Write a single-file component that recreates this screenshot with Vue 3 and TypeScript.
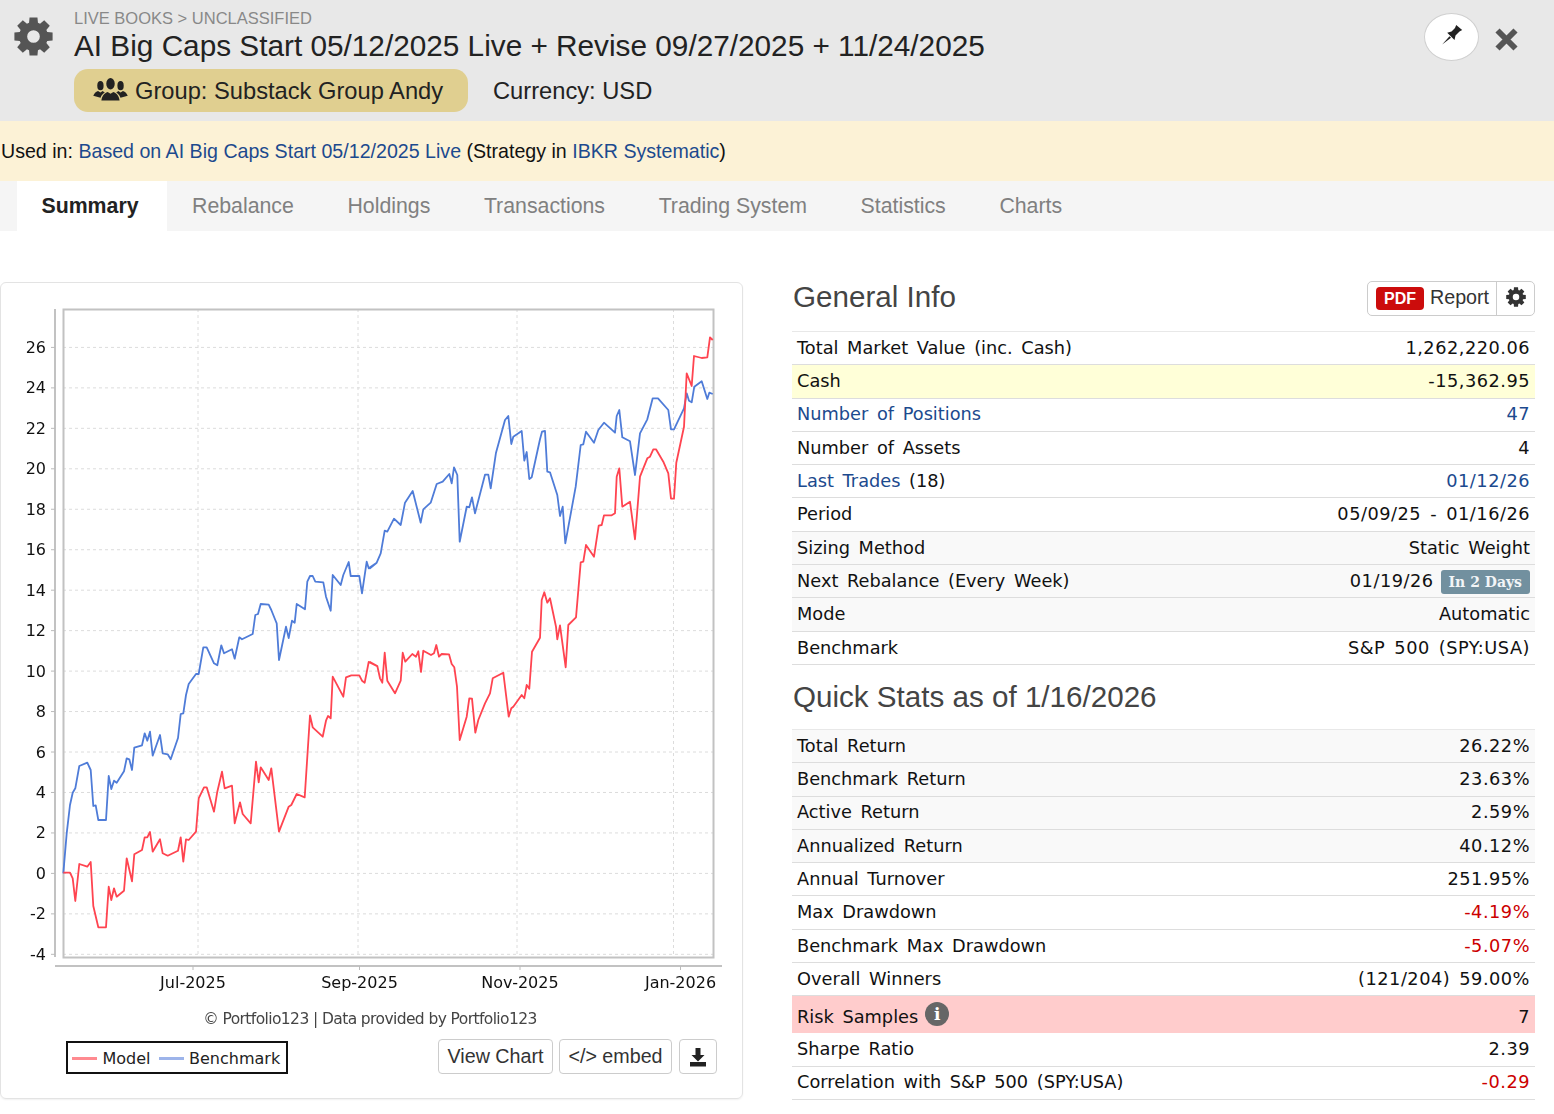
<script setup lang="ts">
type P = [number, number]

function gear(cx: number, cy: number, r: number, hole: number, teeth: number): string {
  const pts: string[] = []
  const outer = r
  const inner = r * 0.74
  for (let i = 0; i < teeth; i++) {
    const a = (i * 2 * Math.PI) / teeth - Math.PI / 2
    const w = Math.PI / teeth
    const seq: [number, number][] = [
      [inner, a - w * 0.8],
      [outer, a - w * 0.52],
      [outer, a + w * 0.52],
      [inner, a + w * 0.8],
    ]
    for (const [rr, t] of seq) pts.push(`${(cx + rr * Math.cos(t)).toFixed(2)} ${(cy + rr * Math.sin(t)).toFixed(2)}`)
  }
  const h = `M${cx - hole} ${cy}a${hole} ${hole} 0 1 0 ${hole * 2} 0a${hole} ${hole} 0 1 0 ${-hole * 2} 0z`
  return `M${pts.join('L')}z${h}`
}
const gearD = gear(12, 12, 12, 3.9, 8)

const z3 = (a: number[]): P[] => {
  const out: P[] = []
  for (let i = 0; i < a.length; i += 2) out.push([a[i] / 3, 280 + a[i + 1] / 3])
  return out
}
const z4 = (a: number[]): P[] => {
  const out: P[] = []
  for (let i = 0; i < a.length; i += 2) out.push([370 + a[i] / 3, 280 + a[i + 1] / 3])
  return out
}
const z5 = (a: number[]): P[] => {
  const out: P[] = []
  for (let i = 0; i < a.length; i += 2) out.push([a[i] / 3, 610 + a[i + 1] / 3])
  return out
}
const z6 = (a: number[]): P[] => {
  const out: P[] = []
  for (let i = 0; i < a.length; i += 2) out.push([370 + a[i] / 3, 610 + a[i + 1] / 3])
  return out
}
const pts = (p: P[]) => p.map(([x, y]) => `${x.toFixed(1)},${(y - 282).toFixed(1)}`).join(' ')

const blue = pts([
  ...z5([190,790,200,670,210,585,218,548,226,535,238,468,262,458,272,480,280,588,287,586,295,630,318,630,326,498,334,537,342,512,350,518,372,484,380,445,388,448,396,480,403,413,426,406,434,370,442,392,450,365,458,437,480,375,488,430,503,433,512,448,534,384,542,312,550,310,558,255,566,222,588,192,596,192,610,112,620,112,642,160,652,166,664,106,672,130,696,118,704,146,718,82,726,88,758,72,766,15,774,12]),
  ...z3([782,972,806,974,814,990,826,1020]),
  ...z5([830,40,837,150,858,50,866,84,876,32,884,38]),
  ...z3([890,972,915,988,922,905,930,888,938,888,946,905,970,907,978,950,992,992,998,885,1022,915,1030,885,1046,846,1052,888,1078,888,1086,940,1100,845,1106,865,1130,848]),
  ...z4([0,865,20,848,32,820,44,752,52,755,72,716,92,735,105,668,128,633,152,728,160,688,182,668,200,612,218,605,238,582,245,610,252,562,262,585,269,785,290,680,298,682,306,652,315,700,345,584,355,584,362,625,378,518,405,420,415,408,424,492,430,470,455,453,463,542,470,516,478,597,485,592,510,478,516,455,525,453,532,575,540,577,562,645,570,708,578,680,586,790,617,620,632,495,640,493,648,455,672,488,685,450,702,428,735,458,740,408,748,390,757,472,780,484,795,585,810,460,832,418,848,355,864,355,895,390,903,448,912,448,942,385,950,340,957,362,965,367,973,320,995,304,1012,357,1018,338,1028,342]),
])
const red = pts([
  ...z5([190,788,210,788,218,805,226,873,238,762,262,770,272,756,280,888,295,952,318,952,326,830,334,870,342,835,350,860,372,842,380,745,396,814,403,733,426,720,434,682,442,682,450,666,458,725,480,688,488,730,503,737,534,722,542,682,550,755,558,688,566,690,588,665,596,565,612,532,620,532,642,605,652,545,666,485,674,535,696,527,704,640,720,577,728,612,752,640,768,455,776,517,782,472,806,510,814,475,837,665,866,590,874,585,890,552,914,562,930,316,938,352,968,380,978,332,984,318,992,325,998,200,1030,260,1038,202,1054,196,1078,196,1086,212,1094,218,1106,156,1130,168]),
  ...z6([0,156,22,168,30,205,37,218,44,128,52,212,75,250,92,212,98,128,106,155,127,132,138,140,145,124,153,186,160,122,183,135,192,130,199,105,207,140,215,132,237,133,245,162,253,172,261,230,269,390,290,320,298,265,306,266,316,368,325,330,345,280,360,250,368,205,400,188,416,320,424,295,430,290,455,255,463,265,470,225,478,236,486,125,510,83]),
  ...z4([515,960,523,937,532,968,540,955,558,1040]),
  ...z6([562,88,570,46,587,172,595,45,618,22]),
  ...z4([632,847,640,845,648,795,672,830,686,737,695,735,702,706,725,706,735,700,740,590,748,565,757,680,780,665,795,778,810,590,832,535,840,530,850,508,858,508,880,545,895,580,903,656,912,656,919,548,942,440,950,280,965,318,972,228,995,234,1012,232,1020,172,1028,180]),
])

const yTicks = [26, 24, 22, 20, 18, 16, 14, 12, 10, 8, 6, 4, 2, 0, -2, -4].map((v) => ({
  v,
  y: 873.4 - v * 20.23 - 282,
}))
const xGrid = [198, 358, 517, 673.5]
const xTicks = [
  { x: 193, l: 'Jul-2025' },
  { x: 359.5, l: 'Sep-2025' },
  { x: 520, l: 'Nov-2025' },
  { x: 680.5, l: 'Jan-2026' },
]

const tabs = ['Rebalance', 'Holdings', 'Transactions', 'Trading System', 'Statistics', 'Charts']

interface Row {
  k: string
  v: string
  link?: boolean
  vlink?: boolean
  neg?: boolean
  tone?: 'alt' | 'warn' | 'risk'
  extra?: string
  badge?: string
  info?: boolean
}
const general: Row[] = [
  { k: 'Total Market Value (inc. Cash)', v: '1,262,220.06' },
  { k: 'Cash', v: '-15,362.95', tone: 'warn' },
  { k: 'Number of Positions', v: '47', link: true, vlink: true },
  { k: 'Number of Assets', v: '4' },
  { k: 'Last Trades', extra: ' (18)', v: '01/12/26', link: true, vlink: true },
  { k: 'Period', v: '05/09/25 - 01/16/26' },
  { k: 'Sizing Method', v: 'Static Weight', tone: 'alt' },
  { k: 'Next Rebalance (Every Week)', v: '01/19/26', badge: 'In 2 Days', tone: 'alt' },
  { k: 'Mode', v: 'Automatic', tone: 'alt' },
  { k: 'Benchmark', v: 'S&P 500 (SPY:USA)' },
]
const stats: Row[] = [
  { k: 'Total Return', v: '26.22%', tone: 'alt' },
  { k: 'Benchmark Return', v: '23.63%', tone: 'alt' },
  { k: 'Active Return', v: '2.59%', tone: 'alt' },
  { k: 'Annualized Return', v: '40.12%', tone: 'alt' },
  { k: 'Annual Turnover', v: '251.95%' },
  { k: 'Max Drawdown', v: '-4.19%', neg: true },
  { k: 'Benchmark Max Drawdown', v: '-5.07%', neg: true },
  { k: 'Overall Winners', v: '(121/204) 59.00%' },
  { k: 'Risk Samples', v: '7', tone: 'risk', info: true },
  { k: 'Sharpe Ratio', v: '2.39' },
  { k: 'Correlation with S&P 500 (SPY:USA)', v: '-0.29', neg: true },
]
const isNum = (s: string) => /\d/.test(s)
</script>

<template>
  <div class="page">
    <header class="top">
      <svg class="top-gear" viewBox="0 0 24 24"><path :d="gearD" fill="#555" fill-rule="evenodd" /></svg>
      <div class="top-text">
        <div class="crumb">LIVE BOOKS &gt; UNCLASSIFIED</div>
        <h1 class="title">AI Big Caps Start 05/12/2025 Live + Revise 09/27/2025 + 11/24/2025</h1>
        <div class="meta">
          <span class="group">
            <svg class="users" viewBox="0 0 36 24">
              <g fill="#222">
                <ellipse cx="18" cy="6" rx="4.4" ry="6" />
                <path d="M8.500 23.500c.5-5 3-7.500 6.500-9l3 2 3-2c3.500 1.500 6 4 6.500 9z" />
                <ellipse cx="7.500" cy="8" rx="3.300" ry="4.800" />
                <path d="M0 18.500c1-2.500 2.500-4 5-5l2.500 1.500 2.300-1.400c.7.500 1.400 1 2.200 1.400-2 1.200-3.600 3-4.400 5.500z" />
                <ellipse cx="28.500" cy="8" rx="3.300" ry="4.800" />
                <path d="M36 18.500c-1-2.500-2.500-4-5-5l-2.500 1.500-2.300-1.400c-.7.500-1.400 1-2.200 1.400 2 1.200 3.600 3 4.400 5.500z" />
              </g>
            </svg>
            Group: Substack Group Andy
          </span>
          <span class="currency">Currency: USD</span>
        </div>
      </div>
      <div class="top-actions">
        <button class="pin" type="button" aria-label="Pin">
          <svg class="pin-ico" viewBox="0 0 24 24" width="24" height="24">
            <path d="M16.200 2l6 5-2.700 1.500-4 4-1 4.500-7.300-7.300 4.300-1.200 3.500-3.500z" fill="#222" />
            <path d="M9.500 13.200l1.500 1.500-8.800 6.800z" fill="#222" />
          </svg>
        </button>
        <button class="close" type="button" aria-label="Close">
          <svg viewBox="0 0 24 24" width="27" height="27">
            <path d="M4 4l16 16M20 4L4 20" stroke="#555" stroke-width="5.200" />
          </svg>
        </button>
      </div>
    </header>

    <div class="used">
      Used in: <a class="lnk">Based on AI Big Caps Start 05/12/2025 Live</a> (Strategy in <a class="lnk">IBKR Systematic</a>)
    </div>

    <nav class="tabs">
      <span class="tab active">Summary</span>
      <span v-for="t in tabs" :key="t" class="tab">{{ t }}</span>
    </nav>

    <main class="content">
      <section class="card">
        <svg class="chart" width="741" height="720" viewBox="0 0 741 720">
          <g class="soft" transform="translate(-1 -1)">
            <g stroke="#dcdcdc" stroke-dasharray="3 3" stroke-width="1">
              <line v-for="t in yTicks" :key="t.v" x1="63" x2="713" :y1="t.y" :y2="t.y" />
              <line v-for="x in xGrid" :key="x" :x1="x" :x2="x" y1="27" y2="675" />
            </g>
            <rect x="63.500" y="27.500" width="650" height="648" fill="none" stroke="#c2c2c2" stroke-width="2" />
            <line x1="55" x2="55" y1="27" y2="675" stroke="#c2c2c2" stroke-width="2" />
            <line x1="55" x2="722" y1="684" y2="684" stroke="#c2c2c2" stroke-width="2" />
            <line v-for="t in yTicks" :key="'y' + t.v" x1="51" x2="55" :y1="t.y" :y2="t.y" stroke="#bbb" />
            <line v-for="t in xTicks" :key="'x' + t.l" :x1="t.x" :x2="t.x" y1="684" y2="688" stroke="#bbb" />
            <polyline :points="blue" fill="none" stroke="#4f7cd8" stroke-width="1.800" stroke-linejoin="round" />
            <polyline :points="red" fill="none" stroke="#ff4450" stroke-width="1.800" stroke-linejoin="round" />
            <text v-for="t in yTicks" :key="'l' + t.v" class="tick" x="46" :y="t.y + 5.500" text-anchor="end">{{ t.v }}</text>
            <text v-for="t in xTicks" :key="'t' + t.l" class="tick" :x="t.x" y="706" text-anchor="middle">{{ t.l }}</text>
            <text class="credit" x="370" y="742" text-anchor="middle">© Portfolio123 | Data provided by Portfolio123</text>
          </g>
        </svg>
        <div class="chart-foot">
          <div class="legend">
            <i class="swatch red"></i><span>Model</span>
            <i class="swatch blue"></i><span>Benchmark</span>
          </div>
          <div class="chart-btns">
            <button class="btn w1" type="button">View Chart</button>
            <button class="btn w2" type="button">&lt;/&gt; embed</button>
            <button class="btn dl" type="button" aria-label="Download">
              <svg viewBox="0 0 20 20" width="20" height="20">
                <path d="M7.500 1h5v7h4L10 14.500 3.500 8h4z" fill="#222" />
                <rect x="2" y="15" width="16" height="4.500" fill="#222" />
              </svg>
            </button>
          </div>
        </div>
      </section>

      <section class="side">
        <div class="head">
          <h2>General Info</h2>
          <div class="report">
            <span class="report-main"><b class="pdf">PDF</b><span class="report-label">Report</span></span>
            <span class="report-gear">
              <svg class="rg" viewBox="0 0 24 24" width="20" height="20"><path :d="gearD" fill="#333" fill-rule="evenodd" /></svg>
            </span>
          </div>
        </div>
        <div class="table general">
          <div v-for="r in general" :key="r.k" class="row" :class="r.tone">
            <span><a v-if="r.link" class="lnk">{{ r.k }}</a><template v-else>{{ r.k }}</template>{{ r.extra }}</span>
            <span class="val" :class="{ neg: r.neg, num: isNum(r.v) }">
              <a v-if="r.vlink" class="lnk">{{ r.v }}</a><template v-else>{{ r.v }}</template>
              <em v-if="r.badge" class="badge">{{ r.badge }}</em>
            </span>
          </div>
        </div>
        <h2 class="h2b">Quick Stats as of 1/16/2026</h2>
        <div class="table">
          <div v-for="r in stats" :key="r.k" class="row" :class="r.tone">
            <span class="key">{{ r.k }}<i v-if="r.info" class="info">i</i></span>
            <span class="val" :class="{ neg: r.neg, num: isNum(r.v) }">{{ r.v }}</span>
          </div>
        </div>
      </section>
    </main>
  </div>
</template>

<style>
html, body { margin: 0; background: #fff; overflow: hidden; }
</style>

<style scoped>
.page { width: 1554px; height: 1114px; overflow: hidden; font-family: "Liberation Sans", Arial, sans-serif; color: #222; background: #fff; }
.top { height: 121px; box-sizing: border-box; background: #e8e8e8; display: flex; align-items: flex-start; padding-left: 14px; }
.top-gear { width: 39px; height: 39px; margin-top: 17px; flex: none; }
.top-text { margin-left: 21px; padding-top: 10px; flex: 1; }
.crumb { font-size: 16.500px; line-height: 17px; color: #888; }
.title { margin: -1px 0 1px; font-size: 29.750px; line-height: 39px; font-weight: 400; color: #222; }
.meta { display: flex; align-items: center; margin-top: 4px; font-size: 23.700px; }
.group { display: inline-flex; align-items: center; gap: 7px; height: 43px; width: 394px; box-sizing: border-box; padding: 2px 0 0 19px; background: #e0cf90; border-radius: 14px; }
.users { width: 35px; height: 23px; margin-top: -5px; }
.currency { margin-left: 25px; padding-top: 2px; }
.top-actions { display: flex; align-items: center; gap: 14px; padding: 13px 34px 0 0; }
.pin { width: 55px; height: 48px; border-radius: 50%; border: 1px solid #d0d0d0; background: #fff; padding: 0; display: flex; align-items: center; justify-content: center; }
.pin-ico { margin-top: -4px; }
.close { width: 27px; height: 27px; margin-top: 4px; background: none; border: 0; padding: 0; display: flex; }
.used { height: 60px; background: #fcf2d6; font-size: 19.620px; line-height: 60px; padding-left: 1px; color: #111; }
.lnk { color: #1c4a8e; }
.tabs { height: 50px; background: #f5f5f5; display: flex; padding-left: 17px; }
.tab { font-size: 21.300px; line-height: 50px; color: #808080; padding: 0 28.600px 0 25px; }
.tab.active { background: #fff; color: #222; font-weight: 700; width: 150px; box-sizing: border-box; padding: 0 4px 0 0; text-align: center; }
.content { display: grid; grid-template-columns: 743px 743px; column-gap: 49px; padding: 50px 0 0 0; }
.card { margin: 1px 0 0 0; height: 817px; box-sizing: border-box; border: 1px solid #e3e3e3; border-radius: 6px; box-shadow: 0 1px 2px rgba(0, 0, 0, 0.06); display: flex; flex-direction: column; position: relative; }
.chart { display: block; flex: none; overflow: visible; }
.soft { filter: blur(0.4px); }
.tick { font-family: "DejaVu Sans", sans-serif; font-size: 16px; fill: #111; }
.credit { font-family: "DejaVu Sans", sans-serif; font-size: 15.500px; fill: #444; letter-spacing: -0.600px; }
.chart-foot { position: absolute; left: 65px; right: 25px; top: 756px; display: flex; justify-content: space-between; align-items: flex-start; }
.legend { margin-top: 2px; width: 222px; height: 33px; box-sizing: border-box; border: 2px solid #111; display: flex; align-items: center; padding: 1px 0 0 4px; font-family: "DejaVu Sans", sans-serif; font-size: 16px; color: #222; }
.swatch { display: block; width: 25px; height: 3px; margin-right: 5.500px; }
.swatch.red { background: #ff8a90; }
.swatch.blue { background: #9db4ea; margin-left: 8px; }
.chart-btns { display: flex; gap: 6px; }
.btn { height: 35px; box-sizing: border-box; background: #fff; border: 1px solid #ccc; border-radius: 4px; font-family: "Liberation Sans", sans-serif; font-size: 19.700px; color: #333; padding: 0; line-height: 1; }
.w1 { width: 115px; }
.w2 { width: 113px; }
.dl { width: 38px; margin-left: 1px; display: flex; align-items: center; justify-content: center; }
.side { padding-top: 0; }
.head { display: flex; justify-content: space-between; align-items: flex-start; height: 50px; }
h2 { margin: 0; font-size: 29.600px; line-height: 32px; font-weight: 400; color: #444; }
.head h2 { margin-left: 1px; }
.report { height: 35px; width: 168px; box-sizing: border-box; border: 1px solid #ccc; border-radius: 5px; display: flex; }
.report-main { flex: 1; display: flex; align-items: center; padding-left: 8px; gap: 6px; font-size: 19.700px; color: #333; }
.report-label { margin-top: -3px; }
.pdf { background: #cc0c0c; color: #fff; font-size: 16px; line-height: 23px; width: 48px; text-align: center; border-radius: 4px; }
.report-gear { width: 37px; border-left: 1px solid #ccc; display: flex; align-items: center; justify-content: center; }
.rg { margin-top: -3px; }
.table { border-top: 1px solid #e8e8e8; }
.row { display: flex; justify-content: space-between; align-items: center; height: 33.300px; box-sizing: border-box; padding: 0 5px 0.600px; border-bottom: 1px solid #ddd; font-family: "DejaVu Sans", Verdana, sans-serif; font-size: 17.750px; word-spacing: 3px; color: #111; }
.row.alt { background: #f9f9f9; }
.row.warn { background: #ffffd8; }
.row.risk { background: #ffcccc; height: 37px; border-bottom: 0; padding: 5px 5px 0; }
.val { display: inline-flex; align-items: center; gap: 7px; }
.num { letter-spacing: 0.500px; }
.neg { color: #cc0000; }
.badge { font-family: "DejaVu Serif", serif; font-style: normal; font-weight: 700; font-size: 14px; line-height: 24px; letter-spacing: 0; word-spacing: 0; color: #f2f5f7; background: #72909f; border-radius: 3px; padding: 0 8px; margin-top: 3px; }
.h2b { margin: 16px 0 16px 1px; }
.key { display: inline-flex; align-items: center; }
.info { margin-left: 7px; margin-top: -6px; width: 24px; height: 24px; border-radius: 50%; background: #666; color: #fff; font: 700 17px/24px "DejaVu Serif", serif; text-align: center; }
</style>
